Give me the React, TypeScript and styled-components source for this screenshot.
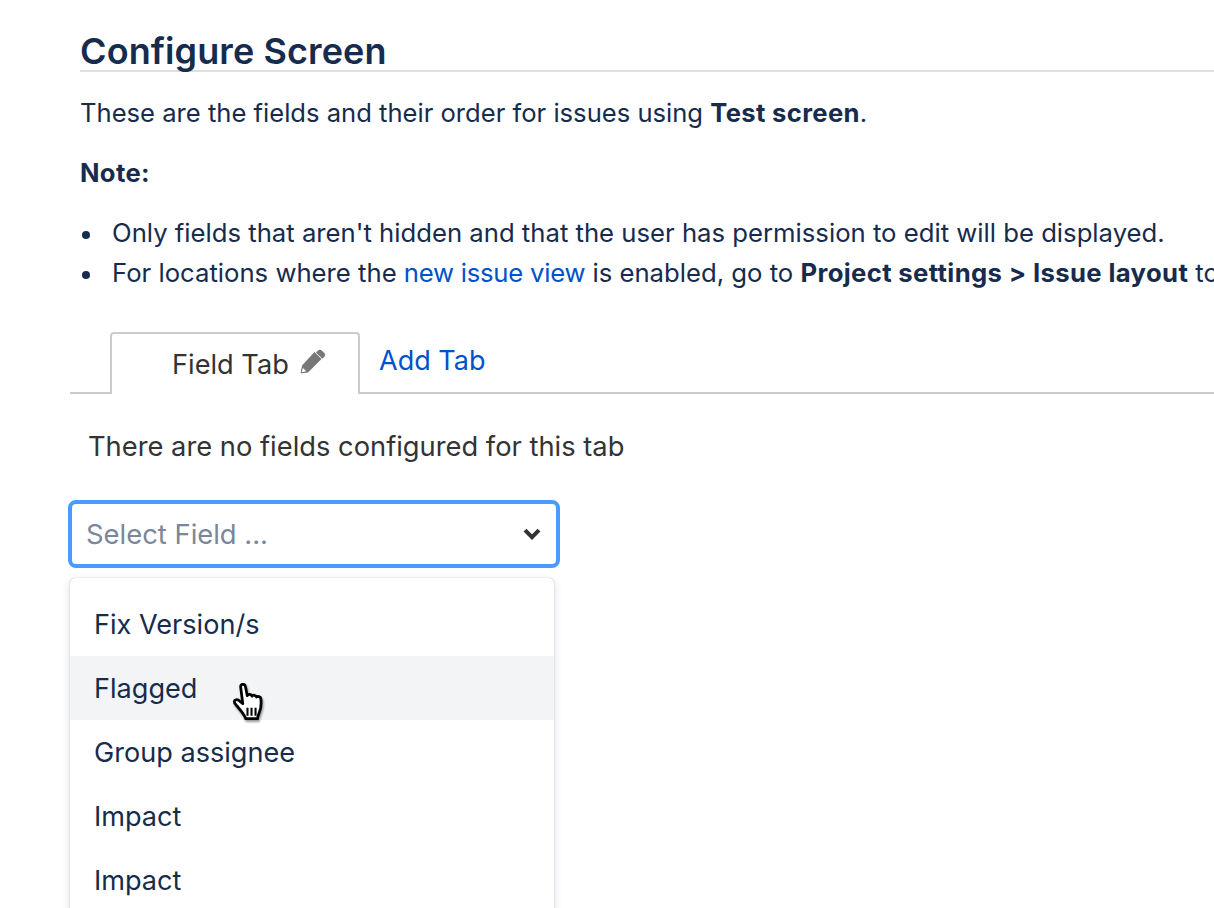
import React from 'react';
import styled, { createGlobalStyle } from 'styled-components';

const GlobalStyle = createGlobalStyle`
  html, body {
    margin: 0;
    padding: 0;
    height: 100%;
    background: #fff;
    overflow: hidden;
  }
  body {
    font-family: Inter, "Liberation Sans", sans-serif;
    color: #172b4d;
  }
  b {
    letter-spacing: 0.35px;
  }
`;

const Page = styled.div`
  width: 1214px;
  height: 908px;
  overflow: hidden;
  padding-left: 70px;
  box-sizing: border-box;
`;

const Intro = styled.div`
  padding-left: 10px;
  white-space: nowrap;
`;

const Title = styled.h1`
  margin: 0;
  padding-top: 28px;
  height: 42px;
  line-height: 46px;
  font-size: 36px;
  font-weight: 600;
  letter-spacing: 0.1px;
  color: #172b4d;
  border-bottom: 2px solid #dfdfdf;
`;

const Lead = styled.p`
  margin: 0;
  padding-top: 23px;
  height: 35px;
  line-height: 35px;
  font-size: 25.6px;
`;

const Text = styled(Lead)`
  padding-top: 25px;
`;

const Bullets = styled.ul`
  list-style: none;
  margin: 23px 0 0;
  padding: 0 0 0 32px;
  font-size: 25.7px;
  line-height: 40px;
`;

const Bullet = styled.li`
  &::before {
    content: '';
    display: inline-block;
    width: 8px;
    height: 8px;
    margin: 0 22px 3px -30px;
    border-radius: 50%;
    background: #172b4d;
  }
`;

const Link = styled.a`
  color: #0052cc;
  text-decoration: none;
`;

const IssueLink = styled(Link)`
  letter-spacing: -0.25px;
`;

const TabBar = styled.div`
  display: flex;
  align-items: flex-end;
  height: 60px;
  margin-top: 39px;
  padding-left: 40px;
  border-bottom: 2px solid #ccc;
`;

const ActiveTab = styled.div`
  display: flex;
  align-items: center;
  box-sizing: border-box;
  width: 250px;
  height: 62px;
  margin-bottom: -2px;
  padding: 0 0 0 60px;
  gap: 10px;
  background: #fff;
  border: 2px solid #ccc;
  border-bottom: none;
  border-radius: 4px 4px 0 0;
  font-size: 27.2px;
  color: #333;
`;

const PencilIcon = styled.svg`
  margin-top: -6px;
`;

const AddTab = styled(Link)`
  align-self: center;
  margin: 0 0 4px 19px;
  font-size: 27px;
`;

const Empty = styled.p`
  margin: 0;
  padding: 35px 0 0 18px;
  height: 36px;
  line-height: 36px;
  font-size: 27.3px;
  color: #333;
`;

const SelectBox = styled.div`
  display: flex;
  align-items: center;
  justify-content: space-between;
  box-sizing: border-box;
  width: 492px;
  height: 68px;
  margin: 35px 0 0 -2px;
  padding: 0 15px 0 14px;
  border: 4px solid #4c9aff;
  border-radius: 8px;
  font-size: 27.4px;
  color: #7a869a;
`;

const Menu = styled.ul`
  list-style: none;
  width: 484px;
  margin: 10px 0 0;
  padding: 14px 0 0;
  background: #fff;
  border-radius: 5px;
  box-shadow: 0 0 1px rgba(9, 30, 66, 0.45), 0 3px 8px rgba(9, 30, 66, 0.16);
`;

const Option = styled.li<{ $hover?: boolean }>`
  position: relative;
  height: 64px;
  line-height: 66px;
  padding-left: 24px;
  font-size: 27.1px;
  color: #172b4d;
  background: ${({ $hover }) => ($hover ? '#f3f4f6' : 'transparent')};
`;

const Cursor = styled.svg`
  position: absolute;
  left: 162px;
  top: 27px;
  filter: drop-shadow(1px 2px 1px rgba(0, 0, 0, 0.4));
`;

const Pencil = () => (
  <PencilIcon width="28" height="26" viewBox="0 0 28 26">
    <path d="M19 2.500c1-1 2.500-1.200 3.500-.2l3 3c1 1 .8 2.500-.2 3.500l-2 2-6.300-6.300z" fill="#777" />
    <path d="M15.500 4l7 7L9 24.500 2 25l1-7.500z" fill="#777" />
    <path d="M3.500 19l4.500 4.500L2 25z" fill="#fff" stroke="#777" strokeWidth="1" />
  </PencilIcon>
);

const Chevron = () => (
  <svg width="18" height="12" viewBox="0 0 18 12">
    <path d="M2 2.200L9 9.200l7-7" fill="none" stroke="#333" strokeWidth="4" />
  </svg>
);

const HandCursor = () => (
  <Cursor width="31" height="37" viewBox="1 0.5 27 32">
    <path
      d="M8.500 3.500c0-2.600 3.700-2.800 4.200 0l1.600 8c.8-1.700 3.700-1.400 4.100.4.900-1.400 3.600-1 3.900.8 1-1 3.600-.6 3.800 1.200.5 4 .2 8.400-1.200 11.800-.7 2-1.400 3.600-1.700 5.800H13c-.9-2.900-3.600-6-6.300-9.500-1.500-1.900-3.800-3.700-3.700-5.400.1-1.700 2.400-2.200 4-1l3.400 2.700z"
      fill="#fff"
      stroke="#000"
      strokeWidth="2.400"
      strokeLinejoin="round"
    />
    <path d="M14.500 22v7M18 22v7M21.500 22v7" stroke="#000" strokeWidth="1.800" />
  </Cursor>
);

const App: React.FC = () => {
  return (
    <Page>
      <GlobalStyle />
      <Intro>
        <Title>Configure Screen</Title>
        <Lead>
          These are the fields and their order for issues using <b>Test screen</b>.
        </Lead>
        <Text>
          <b>Note:</b>
        </Text>
        <Bullets>
          <Bullet>Only fields that aren't hidden and that the user has permission to edit will be displayed.</Bullet>
          <Bullet>
            For locations where the <IssueLink href="#">new issue view</IssueLink> is enabled, go to{' '}
            <b>Project settings &gt; Issue layout</b> to
          </Bullet>
        </Bullets>
      </Intro>
      <TabBar>
        <ActiveTab>
          Field Tab
          <Pencil />
        </ActiveTab>
        <AddTab href="#">Add Tab</AddTab>
      </TabBar>
      <Empty>There are no fields configured for this tab</Empty>
      <SelectBox>
        Select Field ...
        <Chevron />
      </SelectBox>
      <Menu>
        <Option>Fix Version/s</Option>
        <Option $hover>
          Flagged
          <HandCursor />
        </Option>
        <Option>Group assignee</Option>
        <Option>Impact</Option>
        <Option>Impact</Option>
      </Menu>
    </Page>
  );
};

export default App;
